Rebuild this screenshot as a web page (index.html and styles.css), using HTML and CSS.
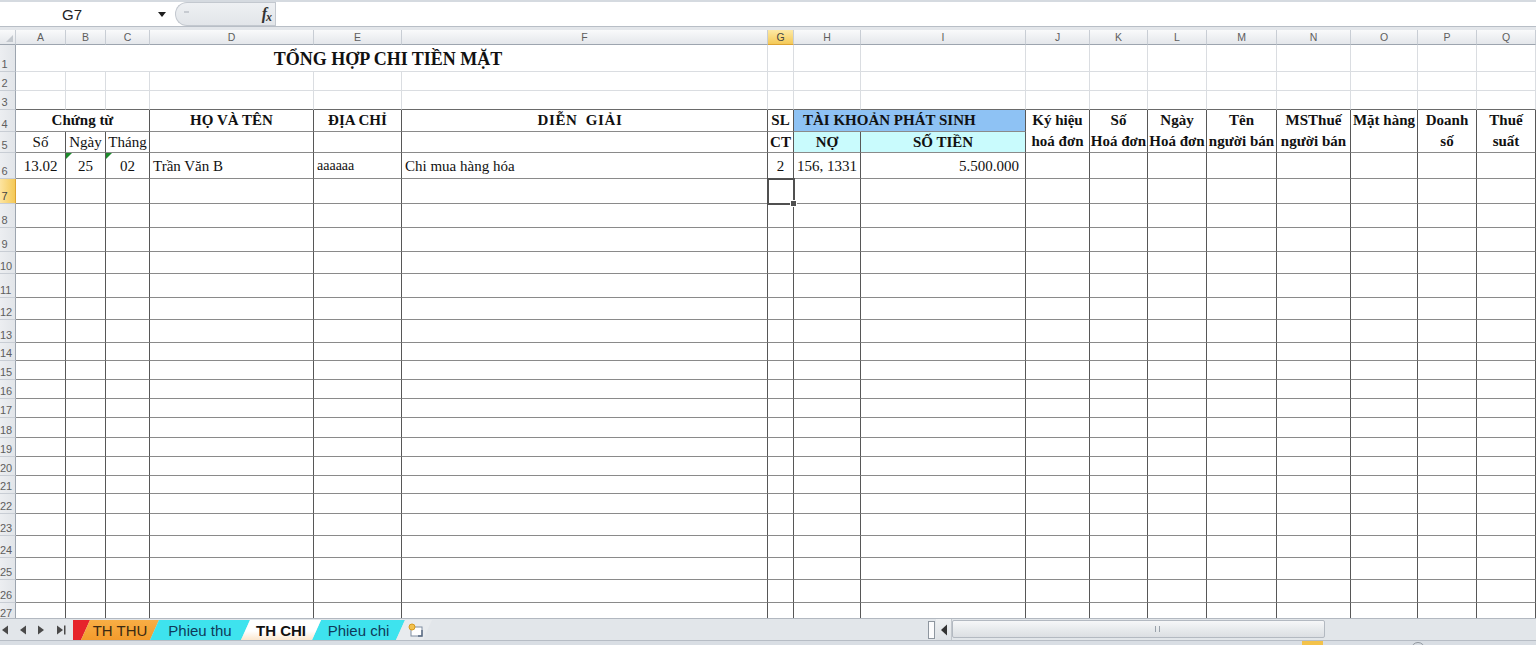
FILE: index.html
```html
<!DOCTYPE html>
<html lang="vi">
<head>
<meta charset="utf-8">
<title>TH CHI</title>
<link rel="stylesheet" href="styles.css">
</head>
<body>
<div class="fbar">
  <div class="namebox"><span class="ref">G7</span><span class="dd"></span></div>
  <div class="fbtns"><span class="cancel"></span><span class="fx">f<span class="fxx">x</span></span></div>
  <div class="finput"></div>
</div>
<div class="gap"></div>
<div class="sheetwrap">
<table class="sheet">
<colgroup>
<col class="c-rh"><col class="c-a"><col class="c-b"><col class="c-c"><col class="c-d"><col class="c-e"><col class="c-f"><col class="c-g"><col class="c-h"><col class="c-i"><col class="c-j"><col class="c-k"><col class="c-l"><col class="c-m"><col class="c-n"><col class="c-o"><col class="c-p"><col class="c-q">
</colgroup>
<tr class="hdr"><th class="corner"><span class="ctri"></span></th><th>A</th><th>B</th><th>C</th><th>D</th><th>E</th><th>F</th><th class="on">G</th><th>H</th><th>I</th><th>J</th><th>K</th><th>L</th><th>M</th><th>N</th><th>O</th><th>P</th><th>Q</th></tr>
<tr class="h27 lite"><th class="rh">1</th><td colspan="6" class="title">TỔNG HỢP CHI TIỀN MẶT</td><td></td><td></td><td></td><td></td><td></td><td></td><td></td><td></td><td></td><td></td><td></td></tr>
<tr class="h19 lite"><th class="rh">2</th><td></td><td></td><td></td><td></td><td></td><td></td><td></td><td></td><td></td><td></td><td></td><td></td><td></td><td></td><td></td><td></td><td></td></tr>
<tr class="h19 lite last"><th class="rh">3</th><td></td><td></td><td></td><td></td><td></td><td></td><td></td><td></td><td></td><td></td><td></td><td></td><td></td><td></td><td></td><td></td><td></td></tr>
<tr class="h21 head"><th class="rh">4</th><td colspan="3" class="ctr">Chứng từ</td><td class="ctr">HỌ VÀ TÊN</td><td class="ctr">ĐỊA CHỈ</td><td class="ctr wide">DIỄN GIẢI</td><td class="ctr">SL</td><td colspan="2" class="blue">TÀI KHOẢN PHÁT SINH</td><td rowspan="2" class="two">Ký hiệu<br>hoá đơn</td><td rowspan="2" class="two">Số<br>Hoá đơn</td><td rowspan="2" class="two">Ngày<br>Hoá đơn</td><td rowspan="2" class="two">Tên<br>người bán</td><td rowspan="2" class="two">MSThuế<br>người bán</td><td rowspan="2" class="two">Mặt hàng</td><td rowspan="2" class="two">Doanh<br>số</td><td rowspan="2" class="two">Thuế<br>suất</td></tr>
<tr class="h21"><th class="rh">5</th><td class="ctr">Số</td><td class="ctr">Ngày</td><td class="ctr">Tháng</td><td></td><td></td><td></td><td class="ctr b">CT</td><td class="ctr b cyan">NỢ</td><td class="ctr b cyan">SỐ TIỀN</td></tr>
<tr class="h26"><th class="rh">6</th><td class="ctr">13.02</td><td class="ctr tri">25</td><td class="ctr tri">02</td><td>Trần Văn B</td><td class="sm">aaaaaa</td><td>Chi mua hàng hóa</td><td class="ctr">2</td><td>156, 1331</td><td class="rt pr">5.500.000</td><td></td><td></td><td></td><td></td><td></td><td></td><td></td><td></td></tr>
<tr class="h25"><th class="rh on">7</th><td></td><td></td><td></td><td></td><td></td><td></td><td class="selcell"><span class="sel"></span></td><td></td><td></td><td></td><td></td><td></td><td></td><td></td><td></td><td></td><td></td></tr>
<tr class="h24"><th class="rh">8</th><td></td><td></td><td></td><td></td><td></td><td></td><td></td><td></td><td></td><td></td><td></td><td></td><td></td><td></td><td></td><td></td><td></td></tr>
<tr class="h24"><th class="rh">9</th><td></td><td></td><td></td><td></td><td></td><td></td><td></td><td></td><td></td><td></td><td></td><td></td><td></td><td></td><td></td><td></td><td></td></tr>
<tr class="h22"><th class="rh">10</th><td></td><td></td><td></td><td></td><td></td><td></td><td></td><td></td><td></td><td></td><td></td><td></td><td></td><td></td><td></td><td></td><td></td></tr>
<tr class="h24"><th class="rh">11</th><td></td><td></td><td></td><td></td><td></td><td></td><td></td><td></td><td></td><td></td><td></td><td></td><td></td><td></td><td></td><td></td><td></td></tr>
<tr class="h22"><th class="rh">12</th><td></td><td></td><td></td><td></td><td></td><td></td><td></td><td></td><td></td><td></td><td></td><td></td><td></td><td></td><td></td><td></td><td></td></tr>
<tr class="h23"><th class="rh">13</th><td></td><td></td><td></td><td></td><td></td><td></td><td></td><td></td><td></td><td></td><td></td><td></td><td></td><td></td><td></td><td></td><td></td></tr>
<tr class="h18"><th class="rh">14</th><td></td><td></td><td></td><td></td><td></td><td></td><td></td><td></td><td></td><td></td><td></td><td></td><td></td><td></td><td></td><td></td><td></td></tr>
<tr class="h19"><th class="rh">15</th><td></td><td></td><td></td><td></td><td></td><td></td><td></td><td></td><td></td><td></td><td></td><td></td><td></td><td></td><td></td><td></td><td></td></tr>
<tr class="h19"><th class="rh">16</th><td></td><td></td><td></td><td></td><td></td><td></td><td></td><td></td><td></td><td></td><td></td><td></td><td></td><td></td><td></td><td></td><td></td></tr>
<tr class="h19"><th class="rh">17</th><td></td><td></td><td></td><td></td><td></td><td></td><td></td><td></td><td></td><td></td><td></td><td></td><td></td><td></td><td></td><td></td><td></td></tr>
<tr class="h20"><th class="rh">18</th><td></td><td></td><td></td><td></td><td></td><td></td><td></td><td></td><td></td><td></td><td></td><td></td><td></td><td></td><td></td><td></td><td></td></tr>
<tr class="h19"><th class="rh">19</th><td></td><td></td><td></td><td></td><td></td><td></td><td></td><td></td><td></td><td></td><td></td><td></td><td></td><td></td><td></td><td></td><td></td></tr>
<tr class="h19"><th class="rh">20</th><td></td><td></td><td></td><td></td><td></td><td></td><td></td><td></td><td></td><td></td><td></td><td></td><td></td><td></td><td></td><td></td><td></td></tr>
<tr class="h18"><th class="rh">21</th><td></td><td></td><td></td><td></td><td></td><td></td><td></td><td></td><td></td><td></td><td></td><td></td><td></td><td></td><td></td><td></td><td></td></tr>
<tr class="h20"><th class="rh">22</th><td></td><td></td><td></td><td></td><td></td><td></td><td></td><td></td><td></td><td></td><td></td><td></td><td></td><td></td><td></td><td></td><td></td></tr>
<tr class="h22"><th class="rh">23</th><td></td><td></td><td></td><td></td><td></td><td></td><td></td><td></td><td></td><td></td><td></td><td></td><td></td><td></td><td></td><td></td><td></td></tr>
<tr class="h22"><th class="rh">24</th><td></td><td></td><td></td><td></td><td></td><td></td><td></td><td></td><td></td><td></td><td></td><td></td><td></td><td></td><td></td><td></td><td></td></tr>
<tr class="h22"><th class="rh">25</th><td></td><td></td><td></td><td></td><td></td><td></td><td></td><td></td><td></td><td></td><td></td><td></td><td></td><td></td><td></td><td></td><td></td></tr>
<tr class="h23"><th class="rh">26</th><td></td><td></td><td></td><td></td><td></td><td></td><td></td><td></td><td></td><td></td><td></td><td></td><td></td><td></td><td></td><td></td><td></td></tr>
<tr class="h22"><th class="rh rh27">27</th><td></td><td></td><td></td><td></td><td></td><td></td><td></td><td></td><td></td><td></td><td></td><td></td><td></td><td></td><td></td><td></td><td></td></tr>
</table>
</div>
<div class="tabbar">
  <div class="nav">
    <svg width="72" height="22" viewBox="0 0 72 22">
      <path d="M2 11 L8 6.5 L8 15.5 Z" fill="#4a4a4a"/>
      <path d="M20 11 L26 6.5 L26 15.5 Z" fill="#4a4a4a"/>
      <path d="M44 11 L38 6.5 L38 15.5 Z" fill="#4a4a4a"/>
      <path d="M63 11 L57 6.5 L57 15.5 Z" fill="#4a4a4a"/>
      <rect x="64" y="6.5" width="1.5" height="9" fill="#4a4a4a"/>
    </svg>
  </div>
  <div class="tabs">
    <div class="tab red"></div>
    <div class="tab orange">TH THU</div>
    <div class="tab cyanT">Phieu thu</div>
    <div class="tab active">TH CHI</div>
    <div class="tab cyanT pc">Phieu chi</div>
    <div class="tab newtab">
      <svg width="20" height="16" viewBox="0 0 20 16">
        <rect x="5" y="5" width="11" height="9" fill="#fff" stroke="#7f8da0" stroke-width="1"/>
        <path d="M16 8 L16 14 L12 14" fill="none" stroke="#5a6b83" stroke-width="1.4"/>
        <circle cx="6" cy="5" r="3" fill="#f2c14e" stroke="#d79a1e" stroke-width="1"/>
      </svg>
    </div>
  </div>
  <div class="hscroll">
    <div class="split"></div>
    <div class="larrow"><svg width="10" height="14" viewBox="0 0 10 14"><path d="M2 7 L8 1.5 L8 12.5 Z" fill="#333"/></svg></div>
    <div class="thumb"><span class="grip"></span></div>
    <div class="track"></div>
  </div>
</div>
<div class="status"><span class="yel"></span><span class="circ"></span></div>
</body>
</html>
```

FILE: styles.css
```css
* { box-sizing: border-box; }
html, body { margin: 0; padding: 0; }
body {
  width: 1536px;
  height: 645px;
  overflow: hidden;
  background: #e3e6ea;
  font-family: "Liberation Sans", Arial, sans-serif;
}

/* formula bar */
.fbar {
  height: 27px;
  display: flex;
  background: #fff;
  border-top: 2px solid #d5dae0;
  border-bottom: 1px solid #b8bec6;
}
.namebox {
  width: 172px;
  display: flex;
  align-items: center;
}
.ref { margin-left: 62px; font-size: 15px; color: #222; }
.dd {
  margin-left: auto;
  margin-right: 6px;
  width: 0; height: 0;
  border-left: 4px solid transparent;
  border-right: 4px solid transparent;
  border-top: 5px solid #1e1e1e;
}
.fbtns {
  width: 100px;
  margin-left: 3px;
  background: linear-gradient(#eef0f3, #e2e5e9);
  border: 1px solid #c3c8cf;
  border-right: none;
  border-radius: 12px 0 0 12px;
  display: flex;
  align-items: center;
  justify-content: space-between;
  padding: 0 4px 0 8px;
}
.cancel { width: 5px; height: 2px; background: #c7cbd1; margin-bottom: 4px; }
.fx {
  font-family: "Liberation Serif", "Times New Roman", serif;
  font-style: italic;
  font-weight: bold;
  font-size: 16px;
  color: #333;
  letter-spacing: -1px;
}
.fxx { font-size: 12px; position: relative; top: 2px; }
.finput { flex: 1; border-left: 1px solid #c3c8cf; background: #fff; }
.gap { height: 3px; }

/* sheet */
.sheetwrap {
  height: 588px;
  overflow: hidden;
  background: #fff;
}
.sheet {
  table-layout: fixed;
  width: 1536px;
  border-collapse: separate;
  border-spacing: 0;
  font-family: "Liberation Serif", "Times New Roman", serif;
  font-size: 15px;
  color: #111;
}
.c-rh { width: 16px; } .c-a { width: 50px; } .c-b { width: 40px; } .c-c { width: 44px; }
.c-d { width: 164px; } .c-e { width: 88px; } .c-f { width: 366px; } .c-g { width: 26px; }
.c-h { width: 67px; } .c-i { width: 165px; } .c-j { width: 64px; } .c-k { width: 58px; }
.c-l { width: 59px; } .c-m { width: 70px; } .c-n { width: 74px; } .c-o { width: 67px; }
.c-p { width: 59px; } .c-q { width: 59px; }

.hdr { height: 15px; }
.hdr th {
  padding: 0;
  font-family: "Liberation Sans", Arial, sans-serif;
  font-weight: normal;
  font-size: 10.5px;
  color: #5e5e5e;
  line-height: 13px;
  background: linear-gradient(#f9fafb, #e4e7eb);
  border-right: 1px solid #c8cdd4;
  border-bottom: 1px solid #9da5af;
}
.hdr th.on {
  background: linear-gradient(#fde9a5, #f4c957);
  border-bottom-color: #dca232;
  color: #444;
}
.corner { position: relative; }
.ctri {
  position: absolute;
  right: 2px; bottom: 2px;
  width: 0; height: 0;
  border-left: 7px solid transparent;
  border-bottom: 7px solid #c3c8ce;
}

.h18 { height: 18px; } .h19 { height: 19px; } .h20 { height: 20px; } .h21 { height: 21px; }
.h22 { height: 22px; } .h23 { height: 23px; } .h24 { height: 24px; } .h25 { height: 25px; }
.h26 { height: 26px; } .h27 { height: 27px; }

th.rh {
  padding: 0 6px 1px 0;
  font-family: "Liberation Sans", Arial, sans-serif;
  font-weight: normal;
  font-size: 11px;
  color: #5e5e5e;
  text-align: center;
  vertical-align: bottom;
  background: linear-gradient(90deg, #eceef1, #e2e5e9);
  border-right: 1px solid #9da5af;
  border-bottom: 1px solid #c8cdd4;
  line-height: 12px;
  overflow: visible;
  white-space: nowrap;
}
th.rh.on {
  background: linear-gradient(90deg, #fde4a0, #f4c957);
  border-right-color: #dca232;
  color: #444;
}
th.rh27 { vertical-align: top; padding-top: 4px; }

.sheet td {
  padding: 0 3px;
  border-right: 1px solid #575757;
  border-bottom: 1px solid #8a8a8a;
  white-space: nowrap;
  vertical-align: middle;
  overflow: visible;
  line-height: 16px;
}
.lite td {
  border-right-color: #dadde1;
  border-bottom-color: #dadde1;
}
.lite.last td { border-bottom-color: #6a6a6a; }
.sheet td.title {
  text-align: center;
  font-weight: bold;
  font-size: 18px;
  padding-top: 2px;
  padding-right: 10px;
}
.head td { font-weight: bold; }
.sheet td.ctr { text-align: center; padding: 0 1px; }
.sheet td.b { font-weight: bold; }
.sheet td.wide { letter-spacing: 0.6px; word-spacing: 4px; padding-right: 10px; }
.sheet td.blue {
  background: #8ec2f4;
  padding-left: 9px;
}
.sheet td.cyan { background: #c9fbfd; }
.sheet td.two {
  vertical-align: top;
  text-align: center;
  line-height: 21px;
  padding: 0;
}
.sheet td.rt { text-align: right; }
.sheet td.pr { padding-right: 6px; }
.sheet td.sm { font-size: 14px; }
.sheet td.tri { position: relative; }
.sheet td.tri::before {
  content: "";
  position: absolute;
  left: 0; top: 0;
  width: 0; height: 0;
  border-top: 6px solid #1d8a2c;
  border-right: 6px solid transparent;
}
.sheet td.selcell { position: relative; padding: 0; }
.sel {
  position: absolute;
  left: -1px; top: -1px; right: -2px; bottom: -2px;
  border: 2px solid #505050;
}
.sel::after {
  content: "";
  position: absolute;
  right: -4px; bottom: -4px;
  width: 5px; height: 5px;
  background: #505050;
  border: 1px solid #fff;
}

/* tab bar */
.tabbar {
  height: 22px;
  display: flex;
  background: #e2e6ea;
  border-top: 1px solid #b2b8c0;
}
.nav { width: 73px; height: 21px; flex: none; }
.tabs {
  width: 855px;
  flex: none;
  display: flex;
  height: 21px;
  font-size: 15px;
}
.tab {
  height: 20px;
  margin-top: 1px;
  display: flex;
  align-items: center;
  justify-content: center;
  clip-path: polygon(9px 0, 100% 0, calc(100% - 9px) 100%, 0 100%);
  margin-left: -9px;
  color: #1a1a1a;
}
.tab.red {
  width: 17px;
  margin-left: 0;
  background: #e6242b;
  clip-path: polygon(0 0, 100% 0, calc(100% - 9px) 100%, 0 100%);
}
.tab.orange {
  width: 78px;
  background: linear-gradient(#f8ae45, #f39b2c);
  color: #3b2a12;
}
.tab.cyanT {
  width: 100px;
  background: #3ee3ee;
  color: #0f3a5a;
}
.tab.pc { width: 93px; }
.tab.active {
  width: 80px;
  background: linear-gradient(#ffffff 55%, #fbe7cf);
  font-weight: bold;
  color: #111;
  position: relative;
  z-index: 1;
}
.tab.newtab {
  width: 36px;
  background: #e8ebee;
  padding-left: 4px;
}

.hscroll {
  flex: 1;
  display: flex;
  height: 21px;
}
.split {
  width: 7px;
  margin: 2px 1px 1px 0;
  background: #fbfbfc;
  border: 1px solid #8e969f;
}
.larrow {
  width: 16px;
  display: flex;
  align-items: center;
  justify-content: center;
  background: linear-gradient(#eef0f2, #dde1e5);
  border-right: 1px solid #c1c6cc;
}
.thumb {
  width: 373px;
  margin: 1px 0 2px 0;
  border: 1px solid #b3b9c1;
  border-radius: 2px;
  background: linear-gradient(#f6f7f8, #e5e8eb 60%, #dcdfe3);
  display: flex;
  align-items: center;
  justify-content: center;
}
.grip {
  width: 5px; height: 6px;
  border-left: 1px solid #9aa2ab;
  border-right: 1px solid #9aa2ab;
  position: relative;
  left: 19px;
}
.track { flex: 1; background: #e2e6ea; }

.status {
  height: 5px;
  background: #d9dee4;
  border-top: 1px solid #b7bdc5;
  position: relative;
}
.yel {
  position: absolute;
  left: 1302px; top: 0;
  width: 21px; height: 4px;
  background: #f3c24a;
}
.circ {
  position: absolute;
  left: 1411px; top: 1px;
  width: 14px; height: 14px;
  border: 1px solid #8e959d;
  border-radius: 50%;
}
```
